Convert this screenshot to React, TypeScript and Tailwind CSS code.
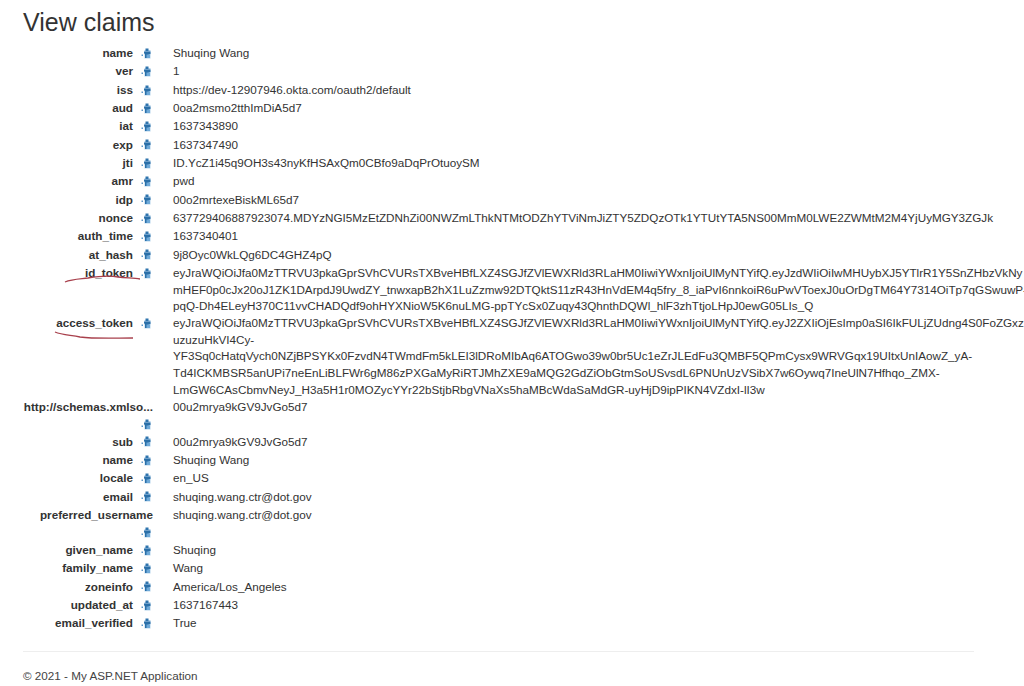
const idToken = [
  "eyJraWQiOiJfa0MzTTRVU3pkaGprSVhCVURsTXBveHBfLXZ4SGJfZVlEWXRld3RLaHM0IiwiYWxnIjoiUlMyNTYifQ.eyJzdWIiOiIwMHUybXJ5YTlrR1Y5SnZHbzVkNy",
  "mHEF0p0cJx20oJ1ZK1DArpdJ9UwdZY_tnwxapB2hX1LuZzmw92DTQktS11zR43HnVdEM4q5fry_8_iaPvI6nnkoiR6uPwVToexJ0uOrDgTM64Y7314OiTp7qGSwuwP-",
  "pqQ-Dh4ELeyH370C11vvCHADQdf9ohHYXNioW5K6nuLMG-ppTYcSx0Zuqy43QhnthDQWl_hlF3zhTtjoLHpJ0ewG05LIs_Q",
];

const accessToken = [
  "eyJraWQiOiJfa0MzTTRVU3pkaGprSVhCVURsTXBveHBfLXZ4SGJfZVlEWXRld3RLaHM0IiwiYWxnIjoiUlMyNTYifQ.eyJ2ZXIiOjEsImp0aSI6IkFULjZUdng4S0FoZGxz",
  "uzuzuHkVI4Cy-",
  "YF3Sq0cHatqVych0NZjBPSYKx0FzvdN4TWmdFm5kLEI3lDRoMIbAq6ATOGwo39w0br5Uc1eZrJLEdFu3QMBF5QPmCysx9WRVGqx19UItxUnIAowZ_yA-",
  "Td4ICKMBSR5anUPi7neEnLiBLFWr6gM86zPXGaMyRiRTJMhZXE9aMQG2GdZiObGtmSoUSvsdL6PNUnUzVSibX7w6Oywq7IneUlN7Hfhqo_ZMX-",
  "LmGW6CAsCbmvNeyJ_H3a5H1r0MOZycYYr22bStjbRbgVNaXs5haMBcWdaSaMdGR-uyHjD9ipPIKN4VZdxI-lI3w",
];

const claims: { name: string; value: string[]; wrapIcon?: boolean }[] = [
  { name: "name", value: ["Shuqing Wang"] },
  { name: "ver", value: ["1"] },
  { name: "iss", value: ["https://dev-12907946.okta.com/oauth2/default"] },
  { name: "aud", value: ["0oa2msmo2tthImDiA5d7"] },
  { name: "iat", value: ["1637343890"] },
  { name: "exp", value: ["1637347490"] },
  { name: "jti", value: ["ID.YcZ1i45q9OH3s43nyKfHSAxQm0CBfo9aDqPrOtuoySM"] },
  { name: "amr", value: ["pwd"] },
  { name: "idp", value: ["00o2mrtexeBiskML65d7"] },
  { name: "nonce", value: ["637729406887923074.MDYzNGI5MzEtZDNhZi00NWZmLThkNTMtODZhYTViNmJiZTY5ZDQzOTk1YTUtYTA5NS00MmM0LWE2ZWMtM2M4YjUyMGY3ZGJk"] },
  { name: "auth_time", value: ["1637340401"] },
  { name: "at_hash", value: ["9j8Oyc0WkLQg6DC4GHZ4pQ"] },
  { name: "id_token", value: idToken },
  { name: "access_token", value: accessToken },
  { name: "http://schemas.xmlso...", value: ["00u2mrya9kGV9JvGo5d7"], wrapIcon: true },
  { name: "sub", value: ["00u2mrya9kGV9JvGo5d7"] },
  { name: "name", value: ["Shuqing Wang"] },
  { name: "locale", value: ["en_US"] },
  { name: "email", value: ["shuqing.wang.ctr@dot.gov"] },
  { name: "preferred_username", value: ["shuqing.wang.ctr@dot.gov"], wrapIcon: true },
  { name: "given_name", value: ["Shuqing"] },
  { name: "family_name", value: ["Wang"] },
  { name: "zoneinfo", value: ["America/Los_Angeles"] },
  { name: "updated_at", value: ["1637167443"] },
  { name: "email_verified", value: ["True"] },
];

function CopyIcon() {
  return (
    <svg width="10" height="11" viewBox="0 0 10 11" className="block">
      <rect x="3.5" y="2" width="6" height="8.5" fill="#b4d3ec" />
      <rect x="4.5" y="0.5" width="3" height="2.5" fill="#2f74ad" />
      <path d="M3 3.5h6.5v2.5l-2 .5v3.5h-3.5v-3.5l-1-1.5z" fill="#2a6fa8" />
      <rect x="5.5" y="6.5" width="3.5" height="3.5" fill="#6ea9d8" />
      <rect x="0.5" y="6.5" width="1.5" height="1.5" fill="#5c97c8" />
    </svg>
  );
}

export default function App() {
  return (
    <div className="relative h-[686px] w-[1024px] overflow-hidden bg-white font-['Liberation_Sans',Arial,sans-serif] text-[11.7px] leading-[16.7px] text-[#333]">
      <div className="pl-[23px]">
        <h2 className="h-[45px] pt-[5px] text-[25px] leading-[34px] font-normal text-[#333]">View claims</h2>
        <dl>
          {claims.map((c, i) => (
            <div key={i} className="flex min-h-[18.33px]">
              <dt className="w-[130px] shrink-0 text-right font-bold">
                {c.wrapIcon ? (
                  <>
                    <span className="block whitespace-nowrap">{c.name}</span>
                    <span className="flex h-[18.3px] items-center justify-end pr-[2px]"><CopyIcon /></span>
                  </>
                ) : (
                  <span className="flex items-center justify-end whitespace-nowrap pr-[2px]">
                    {c.name}
                    <span className="ml-[8px]"><CopyIcon /></span>
                  </span>
                )}
              </dt>
              <dd className="ml-[20px] whitespace-nowrap">
                {c.value.map((line, j) => (
                  <div key={j}>{line}</div>
                ))}
              </dd>
            </div>
          ))}
        </dl>
        <hr className="mt-[17px] w-[951px] border-t border-[#eee]" />
        <footer className="mt-[16px] text-[#444]">© 2021 - My ASP.NET Application</footer>
      </div>
      <svg className="pointer-events-none absolute top-0 left-0" width="1024" height="686">
        <path d="M65 282 C72 279 80 279 88 278 C100 276 108 275 118 277 C126 278 133 278 140 279" fill="none" stroke="#a8404c" strokeWidth="1.3" />
        <path d="M55 332 C62 335 70 335 80 337 C95 339 115 338 133 338" fill="none" stroke="#a8404c" strokeWidth="1.3" />
      </svg>
    </div>
  );
}
